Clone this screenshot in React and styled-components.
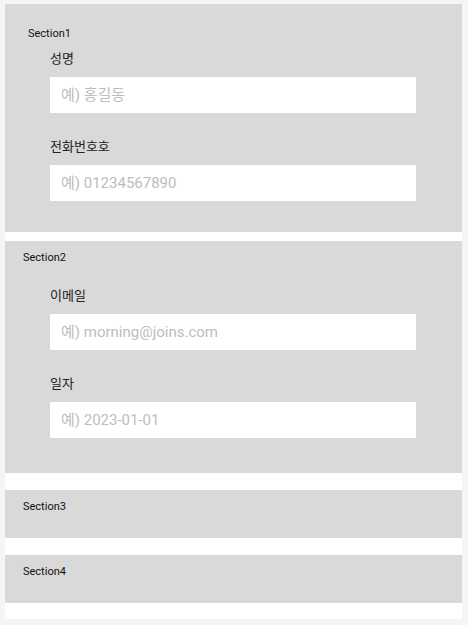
import React from 'react'
import styled, { createGlobalStyle } from 'styled-components'

const GlobalStyle = createGlobalStyle`
    body {
        margin: 0;
        background-color: #f5f5f5;
        font-family: Roboto, "Noto Sans CJK KR", sans-serif;
    }
`

const Page = styled.div`
    padding: 4px 6px 6px 5px;
`

const FormContainer = styled.div`
    width: 457px;
    background-color: #ffffff;
    padding-bottom: 16px;
`

const Section = styled.section`
    background-color: #d9d9d9;
    margin-top: ${props => props.$gap}px;
    padding: ${props => props.$top}px 46px ${props => props.$bottom}px 0;
`

const SectionTitle = styled.p`
    margin: 0;
    padding-left: ${props => props.$indent}px;
    font-size: 11px;
    line-height: 13px;
    color: #111111;
`

const FieldList = styled.div`
    display: flex;
    flex-direction: column;
    gap: 24px;
    padding-left: 45px;
    margin-top: ${props => props.$offset}px;
`

const Field = styled.div`
    display: flex;
    flex-direction: column;
`

const FieldLabel = styled.label`
    margin-bottom: 10px;
    font-family: "Noto Sans CJK KR", Roboto, sans-serif;
    font-size: 13px;
    line-height: 18px;
    color: #222222;
`

const FieldInput = styled.input`
    box-sizing: border-box;
    width: 366px;
    height: 36px;
    border: none;
    outline: none;
    padding: 0 11px;
    background-color: #ffffff;
    font-family: Roboto, "Noto Sans CJK KR", sans-serif;
    font-size: 15px;
    color: #222222;

    &::placeholder {
        color: #bdbdbd;
    }
`

const sections = [
    {
        title: "Section1", gap: 0, top: 23, bottom: 31, indent: 23, offset: 9,
        fields: [
            { label: "성명", placeholder: "예) 홍길동" },
            { label: "전화번호호", placeholder: "예) 01234567890" }
        ]
    },
    {
        title: "Section2", gap: 9, top: 10, bottom: 35, indent: 18, offset: 22,
        fields: [
            { label: "이메일", placeholder: "예) morning@joins.com" },
            { label: "일자", placeholder: "예) 2023-01-01" }
        ]
    },
    { title: "Section3", gap: 17, top: 10, bottom: 25, indent: 18, fields: [] },
    { title: "Section4", gap: 17, top: 10, bottom: 25, indent: 18, fields: [] }
]

export default function App() {
    return (
        <Page>
            <GlobalStyle />
            <FormContainer>
                {sections.map(section => (
                    <Section
                        key={section.title}
                        $gap={section.gap}
                        $top={section.top}
                        $bottom={section.bottom}>
                        <SectionTitle $indent={section.indent}>{section.title}</SectionTitle>
                        {section.fields.length > 0 && (
                            <FieldList $offset={section.offset}>
                                {section.fields.map(field => (
                                    <Field key={field.label}>
                                        <FieldLabel>{field.label}</FieldLabel>
                                        <FieldInput placeholder={field.placeholder} />
                                    </Field>
                                ))}
                            </FieldList>
                        )}
                    </Section>
                ))}
            </FormContainer>
        </Page>
    )
}
